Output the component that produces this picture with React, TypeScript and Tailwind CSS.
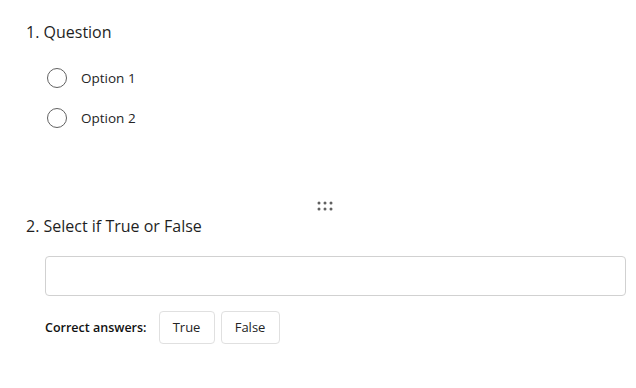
import React from "react";

function Radio({ label }: { label: string }) {
  return (
    <div className="flex items-center h-[40px]">
      <span className="w-[20px] h-[20px] rounded-full border border-[#616161] bg-white box-border" />
      <span className="ml-[14px] text-[13.5px] leading-[20px] text-[#242424]">{label}</span>
    </div>
  );
}

function DragHandle() {
  return (
    <div className="flex justify-center h-[12px] items-center pl-[14px]">
      <svg width="16" height="10" viewBox="0 0 16 10">
        {[2, 8, 14].map((x) =>
          [2, 8].map((y) => <circle key={`${x}-${y}`} cx={x} cy={y} r="1.5" fill="#616161" />)
        )}
      </svg>
    </div>
  );
}

export default function App() {
  return (
    <div className="w-[636px] h-[388px] bg-white font-['Segoe_UI','Open_Sans',sans-serif] text-[#1f1f1f] overflow-hidden">
      <div className="pt-[20px] pl-[26px]">
        <div className="text-[16px] leading-[24px]">1. Question</div>
        <div className="mt-[14px] pl-[21px]">
          <Radio label="Option 1" />
          <Radio label="Option 2" />
        </div>
      </div>
      <div className="mt-[62px]">
        <DragHandle />
      </div>
      <div className="pl-[26px] mt-[2px]">
        <div className="text-[16px] leading-[24px]">2. Select if True or False</div>
        <div className="pl-[19px] pr-[10px] mt-[18px]">
          <div className="h-[40px] w-full rounded-[4px] border border-[#d1d1d1] bg-white" />
          <div className="flex items-center mt-[15px]">
            <span className="text-[12.5px] font-semibold leading-[20px] text-[#111]">Correct answers:</span>
            <div className="flex gap-[6px] ml-[12px]">
              <button className="h-[33px] w-[56px] rounded-[4px] border border-[#e0e0e0] bg-white text-[13px] text-[#242424]">True</button>
              <button className="h-[33px] w-[59px] rounded-[4px] border border-[#e0e0e0] bg-white text-[13px] text-[#242424]">False</button>
            </div>
          </div>
        </div>
      </div>
    </div>
  );
}
